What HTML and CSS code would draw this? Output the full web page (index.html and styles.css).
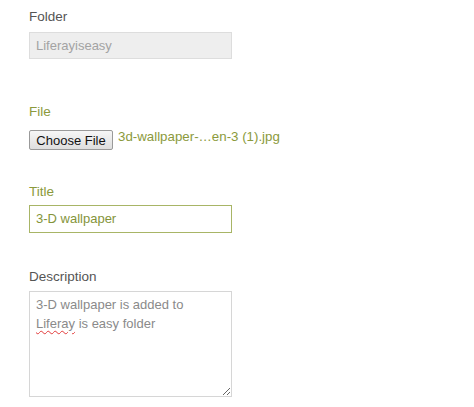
FILE: index.html
```html
<!DOCTYPE html>
<html lang="en">
<head>
<meta charset="utf-8">
<title>Edit document</title>
<link rel="stylesheet" href="styles.css">
</head>
<body>
<form class="form">
  <div class="field field-folder">
    <label class="label">Folder</label>
    <div class="input input-disabled">Liferayiseasy</div>
  </div>
  <div class="field field-file">
    <label class="label label-ok">File</label>
    <div class="file-row">
      <button type="button" class="file-btn">Choose File</button>
      <span class="file-name">3d-wallpaper-…en-3 (1).jpg</span>
    </div>
  </div>
  <div class="field field-title">
    <label class="label label-ok">Title</label>
    <div class="input input-ok">3-D wallpaper</div>
  </div>
  <div class="field field-desc">
    <label class="label">Description</label>
    <div class="textarea">3-D wallpaper is added to <span class="misspelled">Liferay</span> is easy folder</div>
  </div>
</form>
</body>
</html>
```
FILE: styles.css
```css
* { box-sizing: border-box; }
body {
  margin: 0;
  background: #fff;
  font-family: "Liberation Sans", Arial, sans-serif;
}
.form {
  display: flex;
  flex-direction: column;
  align-items: flex-start;
  padding: 7px 0 0 29px;
}
.field {
  display: flex;
  flex-direction: column;
  align-items: flex-start;
}
.label {
  font-size: 13.5px;
  line-height: 20px;
  color: #555;
}
.label-ok { color: #8b9a3c; }
.field-folder { gap: 5px; margin-bottom: 43px; }
.field-file { gap: 8px; margin-bottom: 32px; }
.field-title { gap: 3px; margin-bottom: 34px; }
.field-desc { gap: 4px; }

.input {
  width: 203px;
  font-size: 13px;
  padding: 0 6px;
}
.input-disabled {
  height: 27px;
  line-height: 25px;
  background: #eee;
  border: 1px solid #ddd;
  color: #a3a3a3;
}
.input-ok {
  height: 28px;
  line-height: 26px;
  border: 1px solid #a8b566;
  color: #84943a;
}
.file-row {
  display: flex;
  align-items: flex-start;
  gap: 5px;
  white-space: nowrap;
}
.file-btn {
  flex: none;
  height: 20px;
  width: 84px;
  padding: 0;
  white-space: nowrap;
  font-family: "Liberation Sans", Arial, sans-serif;
  font-size: 13px;
  color: #111;
  background: linear-gradient(#f6f6f6, #dedede);
  border: 1px solid #9a9a9a;
  border-radius: 2px;
}
.file-name {
  font-size: 13.3px;
  line-height: 16px;
  margin-top: -1px;
  color: #8b9a3c;
}
.textarea {
  width: 203px;
  height: 106px;
  border: 1px solid #d6d6d6;
  padding: 3px 6px;
  font-size: 13px;
  line-height: 19px;
  color: #8a8a8a;
  overflow: auto;
  resize: both;
}
.misspelled {
  text-decoration: underline wavy #e23b3b;
  text-decoration-thickness: 1px;
  text-underline-offset: 2px;
}
```
